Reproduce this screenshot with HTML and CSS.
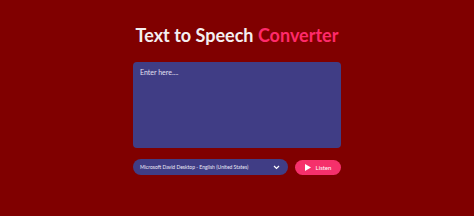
FILE: index.html
```html
<!DOCTYPE html>
<html lang="en">

<head>
	<meta charset="UTF-8">
	<title>Text to Speech Converter</title>
	<link rel="stylesheet" href="styles.css">
</head>

<body>
	<div class="container">
		<h1 class="title">Text to Speech <span>Converter</span></h1>
		<textarea class="text-input" placeholder="Enter here...."></textarea>
		<div class="controls">
			<div class="voice-select">
				<span>Microsoft David Desktop - English (United States)</span>
				<svg class="chevron" width="7" height="5" viewBox="0 0 7 5">
					<path d="M1 1 L3.5 3.5 L6 1" fill="none" stroke="#fff" stroke-width="1.2" />
				</svg>
			</div>
			<button class="listen-btn">
				<svg width="6" height="7" viewBox="0 0 6 7">
					<path d="M0 0 L6 3.5 L0 7 Z" fill="#fff" />
				</svg>
				Listen
			</button>
		</div>
	</div>
</body>

</html>
```

FILE: styles.css
```css
body {
	margin: 0;
	padding: 0;
	background-color: #800000;
	font-family: Lato, "Open Sans", sans-serif;
}

.container {
	width: 208px;
	margin: 0 auto;
	padding-top: 23px;
	display: flex;
	flex-direction: column;
}

.title {
	margin: 0 0 15px;
	font-size: 18px;
	font-weight: bold;
	line-height: 24px;
	color: #f4eef0;
	text-align: center;
	white-space: nowrap;
}

	.title span {
		color: #ff2a6a;
	}

.text-input {
	box-sizing: border-box;
	height: 86px;
	background-color: #403d85;
	border: none;
	border-radius: 4px;
	padding: 6px 7px;
	color: #fff;
	font-family: Lato, sans-serif;
	font-size: 7px;
	resize: none;
	outline: none;
}

	.text-input::placeholder {
		color: #e2e0f2;
		opacity: 1;
	}

.controls {
	margin-top: 11px;
	display: flex;
	justify-content: space-between;
	align-items: center;
}

.voice-select {
	box-sizing: border-box;
	width: 155px;
	height: 16px;
	background-color: #403d85;
	border-radius: 8px;
	padding: 0 8px 0 7px;
	display: flex;
	align-items: center;
	justify-content: space-between;
	color: #eceaf8;
	font-size: 5px;
}

.listen-btn {
	box-sizing: border-box;
	width: 46px;
	height: 15px;
	background-color: #f5306b;
	border: none;
	border-radius: 8px;
	color: #fff;
	font-family: Lato, sans-serif;
	font-size: 6px;
	display: flex;
	align-items: center;
	justify-content: center;
	gap: 5px;
	padding: 0;
	cursor: pointer;
}
```
